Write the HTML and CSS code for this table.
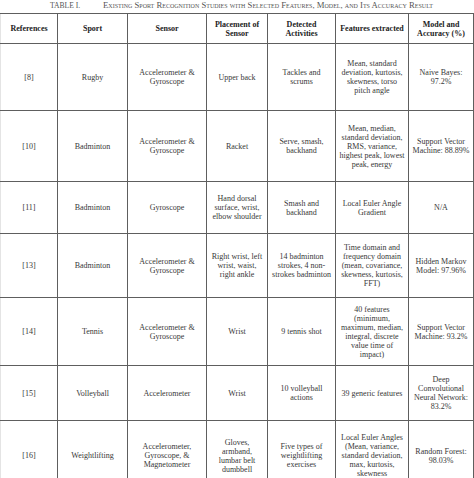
FILE: index.html
```html
<!DOCTYPE html>
<html>
<head>
<meta charset="utf-8">
<link rel="stylesheet" href="styles.css">
</head>
<body>
<div class="caption"><span class="label">TABLE I.</span><span class="title">Existing Sport Recognition Studies with Selected Features, Model, and Its Accuracy Result</span></div>
<table class="tbl">
<colgroup>
<col class="c1"><col class="c2"><col class="c3"><col class="c4"><col class="c5"><col class="c6"><col class="c7">
</colgroup>
<thead>
<tr class="rh">
<th>References</th><th>Sport</th><th>Sensor</th><th>Placement of<br>Sensor</th><th>Detected<br>Activities</th><th>Features extracted</th><th>Model and<br>Accuracy (%)</th>
</tr>
</thead>
<tbody>
<tr class="r1">
<td>[8]</td><td>Rugby</td><td>Accelerometer &amp;<br>Gyroscope</td><td>Upper back</td><td>Tackles and<br>scrums</td><td>Mean, standard<br>deviation, kurtosis,<br>skewness, torso<br>pitch angle</td><td>Naive Bayes:<br>97.2%</td>
</tr>
<tr class="r2">
<td>[10]</td><td>Badminton</td><td>Accelerometer &amp;<br>Gyroscope</td><td>Racket</td><td>Serve, smash,<br>backhand</td><td>Mean, median,<br>standard deviation,<br>RMS, variance,<br>highest peak, lowest<br>peak, energy</td><td>Support Vector<br>Machine: 88.89%</td>
</tr>
<tr class="r3">
<td>[11]</td><td>Badminton</td><td>Gyroscope</td><td>Hand dorsal<br>surface, wrist,<br>elbow shoulder</td><td>Smash and<br>backhand</td><td>Local Euler Angle<br>Gradient</td><td>N/A</td>
</tr>
<tr class="r4">
<td>[13]</td><td>Badminton</td><td>Accelerometer &amp;<br>Gyroscope</td><td>Right wrist, left<br>wrist, waist,<br>right ankle</td><td>14 badminton<br>strokes, 4 non-<br>strokes badminton</td><td>Time domain and<br>frequency domain<br>(mean, covariance,<br>skewness, kurtosis,<br>FFT)</td><td>Hidden Markov<br>Model: 97.96%</td>
</tr>
<tr class="r5">
<td>[14]</td><td>Tennis</td><td>Accelerometer &amp;<br>Gyroscope</td><td>Wrist</td><td>9 tennis shot</td><td>40 features<br>(minimum,<br>maximum, median,<br>integral, discrete<br>value time of<br>impact)</td><td>Support Vector<br>Machine: 93.2%</td>
</tr>
<tr class="r6">
<td>[15]</td><td>Volleyball</td><td>Accelerometer</td><td>Wrist</td><td>10 volleyball<br>actions</td><td>39 generic features</td><td>Deep<br>Convolutional<br>Neural Network:<br>83.2%</td>
</tr>
<tr class="r7">
<td>[16]</td><td>Weightlifting</td><td>Accelerometer,<br>Gyroscope, &amp;<br>Magnetometer</td><td>Gloves,<br>armband,<br>lumbar belt<br>dumbbell</td><td>Five types of<br>weightlifting<br>exercises</td><td>Local Euler Angles<br>(Mean, variance,<br>standard deviation,<br>max, kurtosis,<br>skewness</td><td>Random Forest:<br>98.03%</td>
</tr>
</tbody>
</table>
</body>
</html>
```
FILE: styles.css
```css
html, body {
  margin: 0;
  padding: 0;
  background: #ffffff;
}
body {
  width: 474px;
  height: 478px;
  overflow: hidden;
  font-family: "Liberation Serif", "Times New Roman", serif;
  color: #383838;
}
.caption {
  height: 13px;
  line-height: 11px;
  font-size: 7.6px;
  color: #555;
  white-space: nowrap;
  padding-left: 50px;
  overflow: hidden;
}
.caption .label {
  display: inline-block;
  width: 53px;
}
.caption .title {
  font-variant: small-caps;
  font-size: 8.7px;
}
.tbl {
  border-collapse: collapse;
  table-layout: fixed;
  width: 473px;
  font-size: 8px;
  line-height: 9px;
}
.c1 { width: 57px; }
.c2 { width: 70px; }
.c3 { width: 79px; }
.c4 { width: 61px; }
.c5 { width: 68px; }
.c6 { width: 73px; }
.c7 { width: 65px; }
.tbl th, .tbl td {
  border: 1px solid #5e5e5e;
  text-align: center;
  vertical-align: middle;
  padding: 0 1px;
  white-space: nowrap;
  overflow: hidden;
}
.tbl th {
  font-weight: bold;
  color: #222;
}
.tbl tr > :first-child {
  border-left-color: #e4e4e4;
}
.rh { height: 30px; }
.r1 { height: 67px; }
.r2 { height: 71px; }
.r3 { height: 52px; }
.r4 { height: 64px; }
.r5 { height: 68px; }
.r6 { height: 55px; }
.r7 { height: 70px; }
```
